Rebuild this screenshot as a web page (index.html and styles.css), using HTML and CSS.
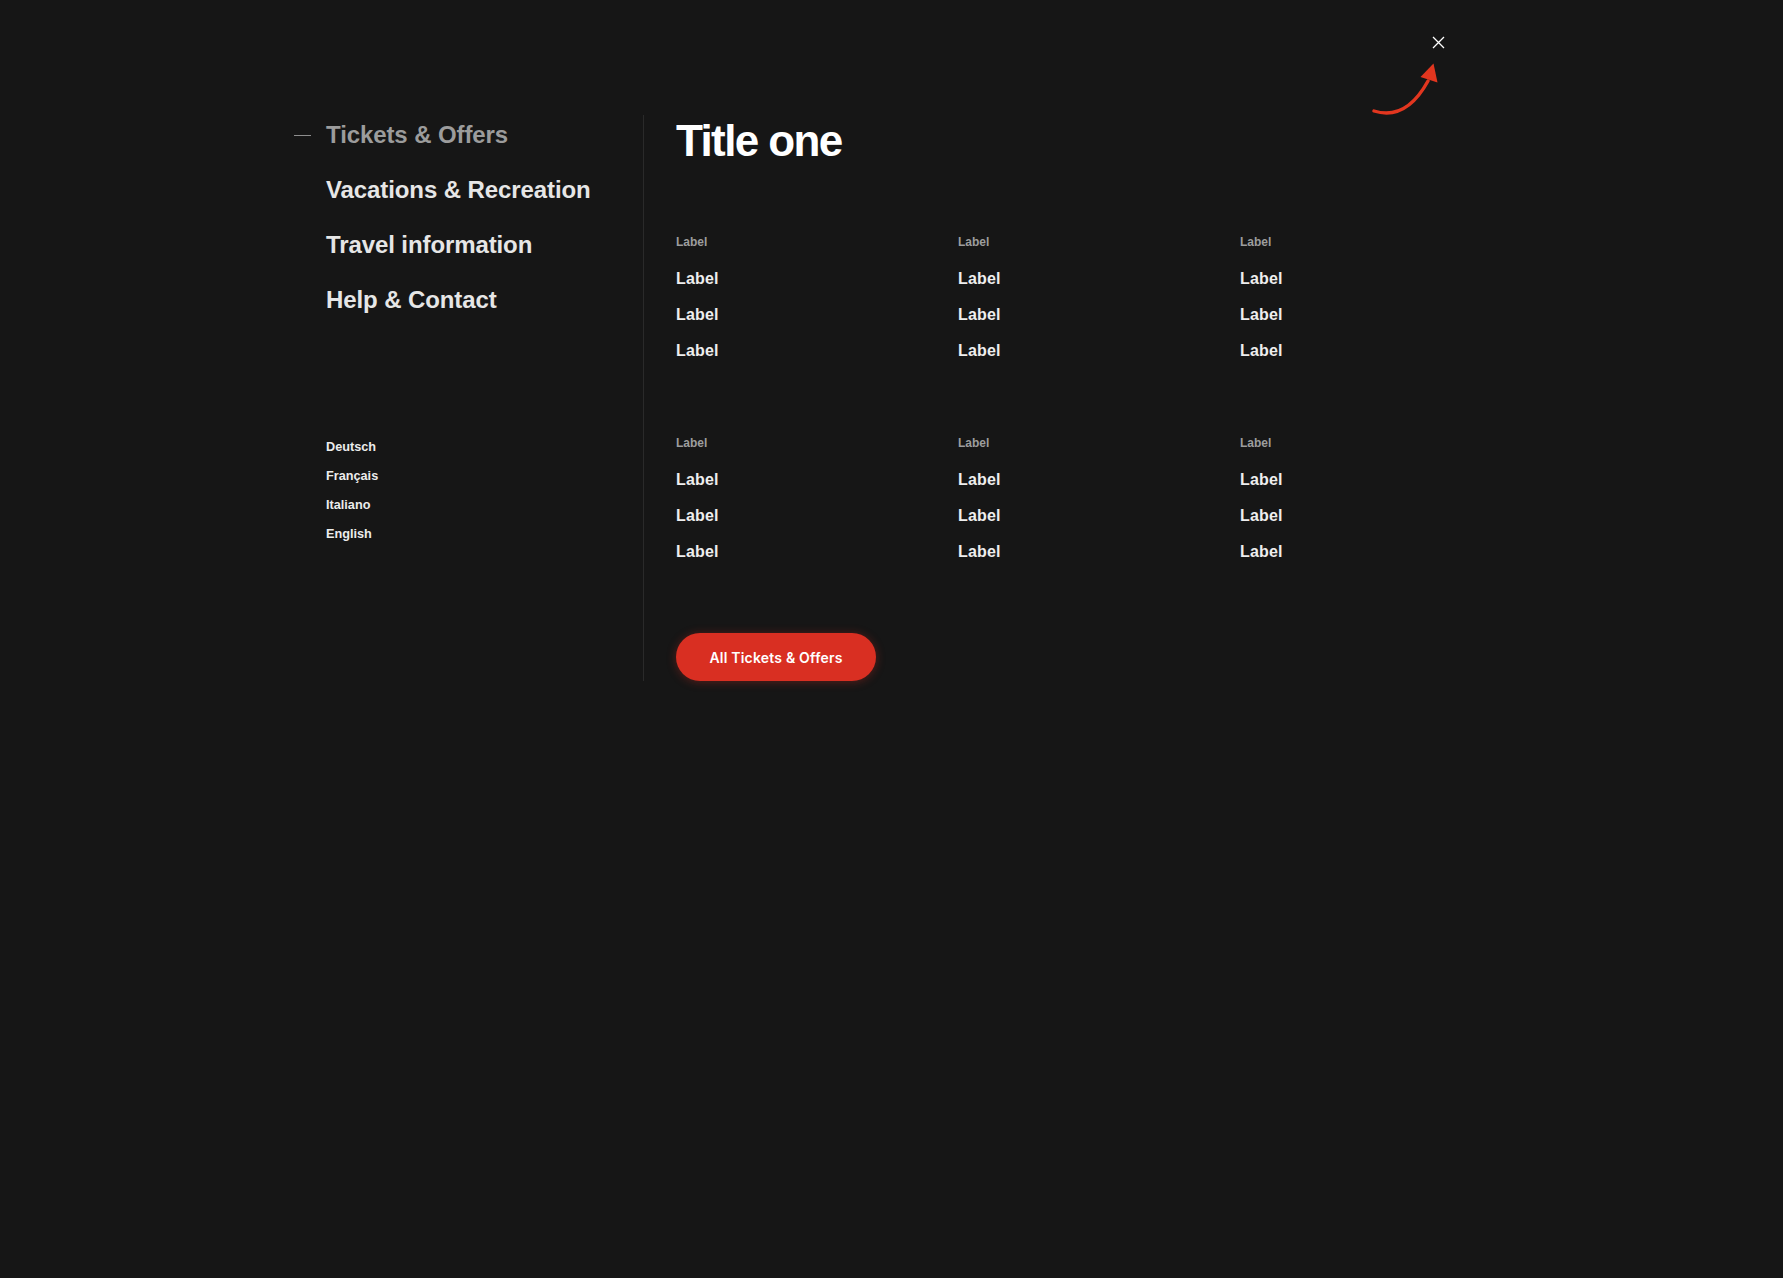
FILE: index.html
```html
<!DOCTYPE html>
<html lang="en">
<head>
<meta charset="utf-8">
<title>Menu</title>
<link rel="stylesheet" href="styles.css">
</head>
<body>
<div class="page">
  <header class="topbar">
    <button class="close" aria-label="Close">
      <svg width="13" height="13" viewBox="0 0 13 13"><path d="M1 1 L12 12 M12 1 L1 12" stroke="#ffffff" stroke-width="1.3" fill="none"/></svg>
    </button>
  </header>
  <svg class="hint-arrow" width="80" height="62" viewBox="0 0 80 62">
    <path d="M9 55 Q 41 65 63 25" stroke="#e2361f" stroke-width="3.4" fill="none" stroke-linecap="round"/>
    <polygon points="68.5,7.5 55.5,21 72.5,26.5" fill="#e2361f"/>
  </svg>
  <main class="main">
    <aside class="sidebar">
      <ul class="nav">
        <li class="nav-item active"><span class="marker"></span>Tickets &amp; Offers</li>
        <li class="nav-item"><span class="marker"></span>Vacations &amp; Recreation</li>
        <li class="nav-item"><span class="marker"></span>Travel information</li>
        <li class="nav-item"><span class="marker"></span>Help &amp; Contact</li>
      </ul>
      <ul class="langs">
        <li>Deutsch</li>
        <li>Français</li>
        <li>Italiano</li>
        <li>English</li>
      </ul>
    </aside>
    <section class="content">
      <h1 class="title">Title one</h1>
      <div class="group first">
        <div class="col"><div class="col-head">Label</div><div class="link">Label</div><div class="link">Label</div><div class="link">Label</div></div>
        <div class="col"><div class="col-head">Label</div><div class="link">Label</div><div class="link">Label</div><div class="link">Label</div></div>
        <div class="col"><div class="col-head">Label</div><div class="link">Label</div><div class="link">Label</div><div class="link">Label</div></div>
      </div>
      <div class="group second">
        <div class="col"><div class="col-head">Label</div><div class="link">Label</div><div class="link">Label</div><div class="link">Label</div></div>
        <div class="col"><div class="col-head">Label</div><div class="link">Label</div><div class="link">Label</div><div class="link">Label</div></div>
        <div class="col"><div class="col-head">Label</div><div class="link">Label</div><div class="link">Label</div><div class="link">Label</div></div>
      </div>
      <button class="cta">All Tickets &amp; Offers</button>
    </section>
  </main>
</div>
</body>
</html>
```

FILE: styles.css
```css
* { box-sizing: border-box; }
html, body { margin: 0; padding: 0; }
body {
  background: #161616;
  color: #e8e8e8;
  font-family: "Liberation Sans", Arial, sans-serif;
  min-height: 1278px;
}
.page {
  position: relative;
  padding-left: 294px;
}
.topbar {
  width: 1151px;
  height: 115px;
  padding-top: 36px;
  display: flex;
  justify-content: flex-end;
  align-items: flex-start;
}
.close {
  width: 13px;
  height: 13px;
  padding: 0;
  margin: 0;
  border: 0;
  background: none;
  display: block;
  cursor: pointer;
}
.close svg { display: block; }
.hint-arrow {
  position: absolute;
  left: 1365px;
  top: 56px;
}
.main {
  display: flex;
  align-items: stretch;
}
.sidebar {
  width: 349px;
  padding-top: 4px;
}
ul { list-style: none; margin: 0; padding: 0; }
.nav {
  display: flex;
  flex-direction: column;
  gap: 23px;
}
.nav-item {
  display: flex;
  align-items: center;
  height: 32px;
  font-size: 24px;
  font-weight: 700;
  letter-spacing: -0.1px;
  color: #e6e6e6;
  white-space: nowrap;
}
.marker {
  width: 17px;
  height: 1px;
  margin-right: 15px;
  flex: none;
}
.nav-item.active { color: #9c9c9c; }
.nav-item.active .marker { background: #8e8e8e; }
.langs {
  margin-top: 117px;
  padding-left: 32px;
}
.langs li {
  font-size: 12.7px;
  font-weight: 700;
  line-height: 29px;
  color: #ececec;
}
.content {
  border-left: 1px solid #2a2a2a;
  padding-left: 32px;
}
.title {
  margin: 0;
  font-size: 44px;
  line-height: 52px;
  font-weight: 700;
  letter-spacing: -1.6px;
  color: #ffffff;
}
.group {
  display: grid;
  grid-template-columns: 282px 282px 282px;
}
.group.first { margin-top: 67px; }
.group.second { margin-top: 74px; }
.col {
  display: flex;
  flex-direction: column;
}
.col-head {
  font-size: 12px;
  line-height: 16px;
  font-weight: 700;
  color: #9d9d9d;
  margin-bottom: 18.5px;
}
.link {
  font-size: 16px;
  line-height: 20px;
  font-weight: 700;
  letter-spacing: 0.15px;
  color: #eeeeee;
}
.link + .link { margin-top: 16.3px; }
.cta {
  display: block;
  margin-top: 71px;
  width: 200px;
  height: 48px;
  border: 0;
  border-radius: 24px;
  background: #d92f22;
  color: #ffffff;
  font-family: Inter, "Liberation Sans", sans-serif;
  font-size: 14px;
  font-weight: 600;
  letter-spacing: 0.2px;
  box-shadow: 0 1px 10px rgba(217, 47, 34, 0.35);
  cursor: pointer;
}
```
